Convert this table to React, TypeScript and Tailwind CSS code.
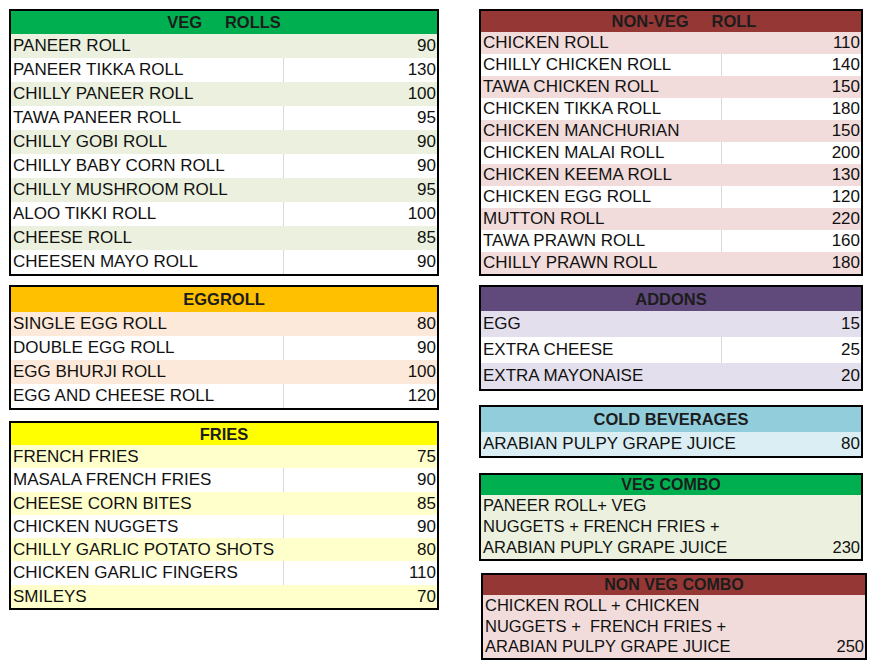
type Item = [string, number];

const vegRolls: Item[] = [
  ["PANEER ROLL", 90], ["PANEER TIKKA ROLL", 130], ["CHILLY PANEER ROLL", 100], ["TAWA PANEER ROLL", 95],
  ["CHILLY GOBI ROLL", 90], ["CHILLY BABY CORN ROLL", 90], ["CHILLY MUSHROOM ROLL", 95], ["ALOO TIKKI ROLL", 100],
  ["CHEESE ROLL", 85], ["CHEESEN MAYO ROLL", 90],
];
const eggRolls: Item[] = [["SINGLE EGG ROLL", 80], ["DOUBLE EGG ROLL", 90], ["EGG BHURJI ROLL", 100], ["EGG AND CHEESE ROLL", 120]];
const fries: Item[] = [
  ["FRENCH FRIES", 75], ["MASALA FRENCH FRIES", 90], ["CHEESE CORN BITES", 85], ["CHICKEN NUGGETS", 90],
  ["CHILLY GARLIC POTATO SHOTS", 80], ["CHICKEN GARLIC FINGERS", 110], ["SMILEYS", 70],
];
const nonVeg: Item[] = [
  ["CHICKEN ROLL", 110], ["CHILLY CHICKEN ROLL", 140], ["TAWA CHICKEN ROLL", 150], ["CHICKEN TIKKA ROLL", 180],
  ["CHICKEN MANCHURIAN", 150], ["CHICKEN MALAI ROLL", 200], ["CHICKEN KEEMA ROLL", 130], ["CHICKEN EGG ROLL", 120],
  ["MUTTON ROLL", 220], ["TAWA PRAWN ROLL", 160], ["CHILLY PRAWN ROLL", 180],
];
const addons: Item[] = [["EGG", 15], ["EXTRA CHEESE", 25], ["EXTRA MAYONAISE", 20]];

type TableProps = {
  title: string;
  headBg: string;
  tint: string;
  items: Item[];
  headH: string;
  rowH: string;
  split: string;
  className?: string;
  titleClass?: string;
};

const MenuTable = ({ title, headBg, tint, items, headH, rowH, split, className = "", titleClass = "" }: TableProps) => (
  <div className={`border-2 border-black ${className}`}>
    <div className={`${headBg} ${headH} flex items-center justify-center font-bold text-[16.5px] text-[#1c1c1c] whitespace-pre ${titleClass}`}>
      {title}
    </div>
    {items.map(([name, price], i) => (
      <div key={name} className={`${rowH} flex items-center text-[17px] text-[#111] ${i % 2 === 0 ? tint : "bg-white"}`}>
        <div className={`${split} shrink-0 h-full flex items-center pl-[2px] whitespace-nowrap ${i % 2 === 0 ? "" : "border-r border-[#d9d9d9]"}`}>{name}</div>
        <div className="flex-1 text-right pr-[1px]">{price}</div>
      </div>
    ))}
  </div>
);

const Combo = ({ title, headBg, tint, lines, price, className = "", leading }: {
  title: string; headBg: string; tint: string; lines: string[]; price: number; className?: string; leading: string;
}) => (
  <div className={`border-2 border-black ${className}`}>
    <div className={`${headBg} h-[20px] flex items-center justify-center font-bold text-[16px] text-[#1c1c1c] whitespace-pre`}>
      {title}
    </div>
    <div className={`${tint} flex items-end justify-between pl-[2px] pr-[1px] pb-[1px] text-[16.5px] text-[#111] ${leading}`}>
      <div className="whitespace-pre">
        {lines.map(l => <div key={l}>{l}</div>)}
      </div>
      <div>{price}</div>
    </div>
  </div>
);

export default function App() {
  return (
    <div className="w-[874px] h-[667px] bg-white overflow-hidden flex pl-[9px] pt-[9px]" style={{ fontFamily: '"Liberation Sans", Arial, sans-serif' }}>
      {/* left column */}
      <div className="w-[430px] flex flex-col">
        <MenuTable title="VEG     ROLLS" headBg="bg-[#00b050]" tint="bg-[#ebf1de]" items={vegRolls}
          headH="h-[23px]" rowH="h-[24px]" split="w-[273px]" />
        <MenuTable title="EGGROLL" headBg="bg-[#ffc000]" tint="bg-[#fde9d9]" items={eggRolls}
          headH="h-[25px]" rowH="h-[24px]" split="w-[273px]" className="mt-[9px]" />
        <MenuTable title="FRIES" headBg="bg-[#ffff00]" tint="bg-[#ffffcc]" items={fries}
          headH="h-[22px]" rowH="h-[23.3px]" split="w-[273px]" className="mt-[11px]" />
      </div>

      {/* right column */}
      <div className="w-[386px] ml-[40px] flex flex-col">
        <MenuTable title="NON-VEG     ROLL" headBg="bg-[#953735]" tint="bg-[#f2dcdb]" items={nonVeg}
          headH="h-[21px]" rowH="h-[22px]" split="w-[241px]" className="w-[384px]" titleClass="pl-[26px]" />
        <MenuTable title="ADDONS" headBg="bg-[#604a7b]" tint="bg-[#e4dfec]" items={addons}
          headH="h-[24px]" rowH="h-[26px]" split="w-[241px]" className="w-[384px] mt-[9px]" />
        <MenuTable title="COLD BEVERAGES" headBg="bg-[#92cddc]" tint="bg-[#daeef3]" items={[["ARABIAN PULPY GRAPE JUICE", 80]]}
          headH="h-[25px]" rowH="h-[24px]" split="w-[241px]" className="w-[384px] mt-[14px]" />
        <Combo title="VEG COMBO" headBg="bg-[#00b050]" tint="bg-[#ebf1de]" price={230}
          lines={["PANEER ROLL+ VEG", "NUGGETS + FRENCH FRIES +", "ARABIAN PUPLY GRAPE JUICE"]}
          leading="leading-[21px]" className="w-[384px] mt-[15px]" />
        <Combo title="NON VEG COMBO" headBg="bg-[#953735]" tint="bg-[#f2dcdb]" price={250}
          lines={["CHICKEN ROLL + CHICKEN", "NUGGETS +  FRENCH FRIES +", "ARABIAN PULPY GRAPE JUICE"]}
          leading="leading-[20.5px]" className="w-[386px] ml-[2px] mt-[12px]" />
      </div>
    </div>
  );
}
